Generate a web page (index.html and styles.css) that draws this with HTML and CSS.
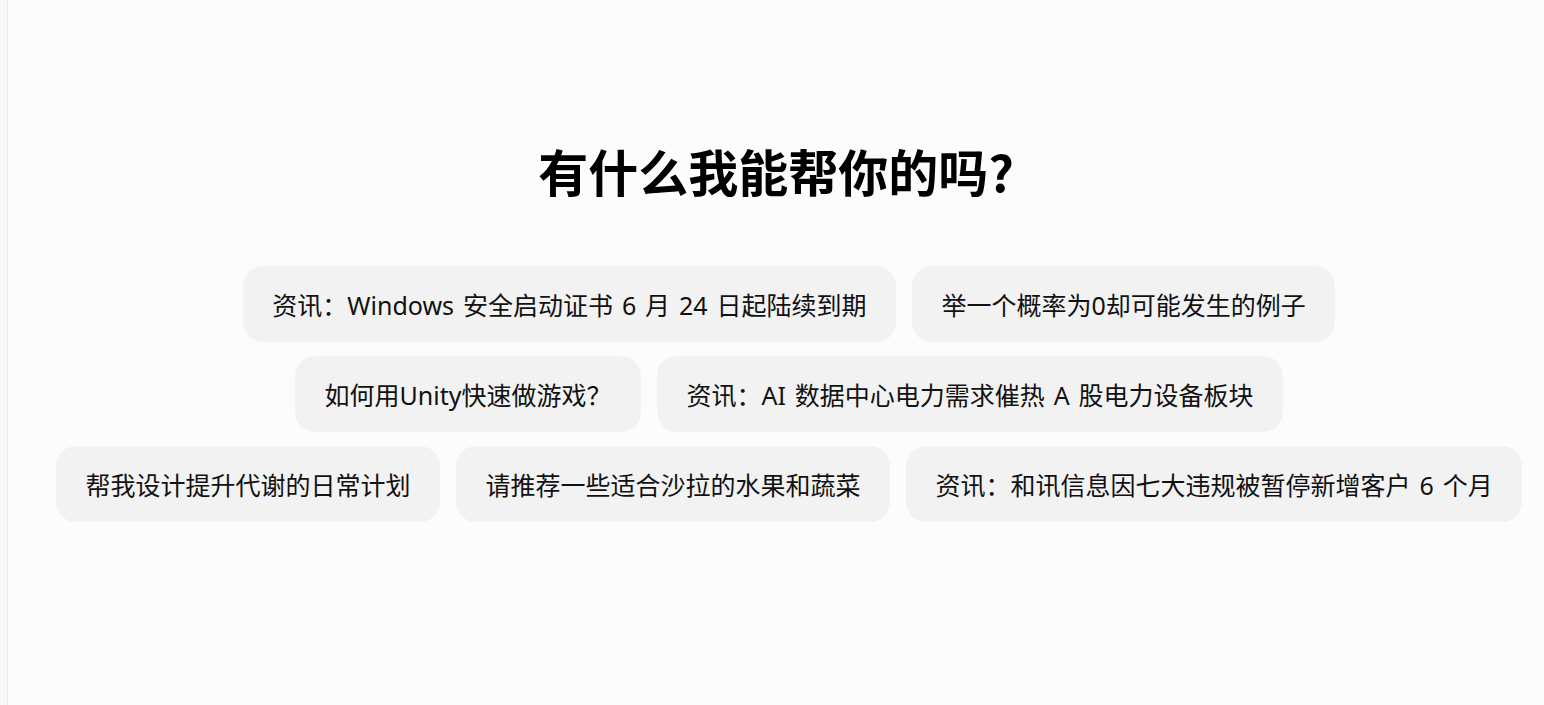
FILE: index.html
```html
<!DOCTYPE html>
<html lang="zh-CN">
<head>
<meta charset="utf-8">
<title>有什么我能帮你的吗?</title>
<link rel="stylesheet" href="styles.css">
</head>
<body>
<div class="app">
  <aside class="rail"></aside>
  <main class="main">
    <h1 class="title">有什么我能帮你的吗?</h1>
    <div class="prompts">
      <div class="row">
        <button class="chip">资讯：Windows 安全启动证书 6 月 24 日起陆续到期</button>
        <button class="chip">举一个概率为0却可能发生的例子</button>
      </div>
      <div class="row">
        <button class="chip">如何用Unity快速做游戏？</button>
        <button class="chip">资讯：AI 数据中心电力需求催热 A 股电力设备板块</button>
      </div>
      <div class="row">
        <button class="chip">帮我设计提升代谢的日常计划</button>
        <button class="chip">请推荐一些适合沙拉的水果和蔬菜</button>
        <button class="chip">资讯：和讯信息因七大违规被暂停新增客户 6 个月</button>
      </div>
    </div>
  </main>
</div>
</body>
</html>
```

FILE: styles.css
```css
html, body {
  margin: 0;
  padding: 0;
  height: 100%;
}
body {
  background: #fcfcfc;
  font-family: "Noto Sans", "Noto Sans CJK SC", sans-serif;
  color: #1a1a1a;
  overflow: hidden;
}
.app {
  display: flex;
  height: 100%;
}
.rail {
  width: 7px;
  flex: none;
  background: #f8f8f8;
  border-right: 1px solid #e9e9e9;
}
.main {
  flex: 1;
  display: flex;
  flex-direction: column;
  align-items: center;
  padding-top: 140px;
}
.title {
  margin: 0;
  font-family: "Noto Sans CJK SC", sans-serif;
  font-weight: 700;
  font-size: 50px;
  line-height: 60px;
  color: #000;
}
.prompts {
  align-self: stretch;
  margin: 66px 22px 0 48px;
  display: flex;
  flex-direction: column;
  gap: 14px;
}
.row {
  display: flex;
  justify-content: center;
  gap: 16px;
}
.chip {
  height: 76px;
  padding: 0 29.5px;
  border: none;
  border-radius: 20px;
  background: #f2f2f2;
  font-family: "Noto Sans", "Noto Sans CJK SC", sans-serif;
  font-size: 25px;
  word-spacing: 2.4px;
  color: #111;
  white-space: nowrap;
  cursor: pointer;
}
```
